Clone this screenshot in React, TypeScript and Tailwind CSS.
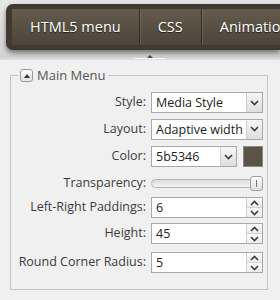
import type { ReactNode } from "react";

function Chevron({ up = false }: { up?: boolean }) {
  return (
    <svg width="9" height="6" viewBox="0 0 9 6" className={up ? "rotate-180" : ""}>
      <path d="M1 1 L4.5 4.5 L8 1" fill="none" stroke="#3a3a3a" strokeWidth="1.6" />
    </svg>
  );
}

function Select({ value, className = "" }: { value: string; className?: string }) {
  return (
    <div className={`flex h-[21px] border border-[#a9a9a9] bg-white ${className}`}>
      <div className="flex-1 overflow-hidden whitespace-nowrap pl-[4px] text-[12.5px] leading-[19px] text-[#222]">{value}</div>
      <div className="flex w-[16px] items-center justify-center border-l border-[#cfcfcf] bg-gradient-to-b from-[#f6f6f6] to-[#dedede]">
        <Chevron />
      </div>
    </div>
  );
}

function NumberInput({ value }: { value: string }) {
  return (
    <div className="flex h-[21px] w-[112px] border border-[#a9a9a9] bg-white">
      <div className="flex-1 pl-[4px] text-[12.5px] leading-[19px] text-[#222]">{value}</div>
      <div className="flex w-[16px] flex-col border-l border-[#cfcfcf]">
        <div className="flex flex-1 items-center justify-center border-b border-[#d4d4d4] bg-gradient-to-b from-[#fbfbfb] to-[#ececec]">
          <Chevron up />
        </div>
        <div className="flex flex-1 items-center justify-center bg-gradient-to-b from-[#fbfbfb] to-[#ececec]">
          <Chevron />
        </div>
      </div>
    </div>
  );
}

function Row({ label, h, children }: { label: string; h: string; children: ReactNode }) {
  return (
    <div className={`flex items-center gap-[5px] ${h}`}>
      <div className="w-[135px] whitespace-nowrap text-right text-[12.5px] text-[#3c3c3c]">{label}</div>
      <div className="flex w-[112px] items-center">{children}</div>
    </div>
  );
}

export default function App() {
  return (
    <div className="h-[300px] w-[280px] overflow-hidden bg-[#f0f0f0] font-['Open_Sans',sans-serif]">
      <div className="h-[58px] bg-gradient-to-b from-[#e6e6e6] to-[#d2d2d2] pt-[4px] pl-[6px]">
        <div className="flex h-[46px] overflow-hidden rounded-l-[7px] bg-[#3f392f] py-[5px] pl-[6px] shadow-[0_3px_5px_rgba(0,0,0,0.45)]">
          {["HTML5 menu", "CSS", "Animation"].map((t, i) => (
            <div
              key={t}
              className={`flex shrink-0 items-center whitespace-nowrap bg-gradient-to-b from-[#645b4d] to-[#4c4539] px-[18px] text-[14.5px] text-white [text-shadow:0_1px_1px_rgba(0,0,0,0.6)] ${i > 0 ? "border-l border-[#2f2a22] shadow-[inset_1px_0_0_rgba(255,255,255,0.12)]" : ""}`}
            >
              {t}
            </div>
          ))}
        </div>
      </div>
      <div className="relative h-[2px] bg-[#dcdcdc]">
        <div className="absolute left-[135px] top-0 h-[1px] w-[30px] bg-white" />
        <div className="absolute left-[147px] top-[-3px] h-0 w-0 border-x-[3px] border-b-[3px] border-x-transparent border-b-[#444]" />
      </div>
      <fieldset className="ml-[10px] mr-[12px] mt-[6px] border border-[#c4c4c4] pb-[11px]">
        <legend className="ml-[7px] flex items-center gap-[4px] px-[2px] text-[13px] text-[#555]">
          <span className="flex h-[13px] w-[13px] items-center justify-center rounded-[3px] border border-[#9a9a9a] bg-gradient-to-b from-white to-[#e2e2e2]">
            <span className="h-0 w-0 border-x-[3px] border-b-[4px] border-x-transparent border-b-[#333]" />
          </span>
          Main Menu
        </legend>
        <div className="pt-[4px]">
          <Row label="Style:" h="h-[26px]">
            <Select value="Media Style" className="w-[112px]" />
          </Row>
          <Row label="Layout:" h="h-[27px]">
            <Select value="Adaptive width" className="w-[112px]" />
          </Row>
          <Row label="Color:" h="h-[28px]">
            <Select value="5b5346" className="w-[86px]" />
            <div className="ml-[6px] h-[21px] w-[20px] border border-[#8a8a8a] bg-[#5b5346]" />
          </Row>
          <Row label="Transparency:" h="h-[25px]">
            <div className="relative h-[9px] w-[112px] rounded-[5px] border border-[#b5b5b5] bg-gradient-to-b from-[#dcdcdc] to-[#f4f4f4]">
              <div className="absolute right-[-1px] top-[-4px] flex h-[15px] w-[13px] items-center justify-center rounded-[3px] border border-[#a0a0a0] bg-gradient-to-b from-white to-[#e0e0e0]">
                <div className="h-[7px] w-[1px] bg-[#777]" />
              </div>
            </div>
          </Row>
          <Row label="Left-Right Paddings:" h="h-[24px]">
            <NumberInput value="6" />
          </Row>
          <Row label="Height:" h="h-[28px]">
            <NumberInput value="45" />
          </Row>
          <Row label="Round Corner Radius:" h="h-[30px]">
            <NumberInput value="5" />
          </Row>
        </div>
      </fieldset>
    </div>
  );
}
